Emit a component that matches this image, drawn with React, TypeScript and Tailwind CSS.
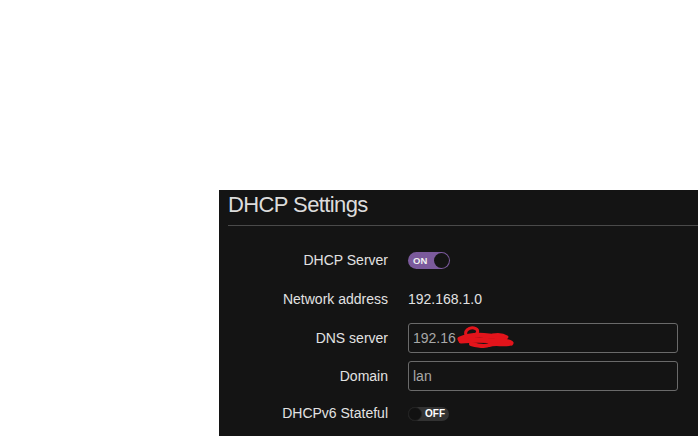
import React from "react";

const font = { fontFamily: '"Liberation Sans", Arial, sans-serif' };

function Label({ children }: { children: React.ReactNode }) {
  return (
    <div className="w-[169px] shrink-0 text-right text-[14px] text-[#e2e2e2]">{children}</div>
  );
}

export default function App() {
  return (
    <div className="min-h-[436px] w-[698px] bg-white pl-[219px] pt-[190px]" style={font}>
      <div className="h-[246px] w-[479px] bg-[#141414] overflow-hidden">
        <div className="pl-[9px]">
          <div className="h-[35px] pt-[2px] text-[22px] leading-[26px] tracking-[-0.6px] text-[#dcdcdc]">
            DHCP Settings
          </div>
          <div className="h-px bg-[#4a4a4a]" />
        </div>
        <div className="mt-[15px] flex flex-col">
          <div className="flex h-[39px] items-center gap-[20px]">
            <Label>DHCP Server</Label>
            <div className="relative flex h-[17px] w-[42px] items-center rounded-full bg-[#7b5a9c]">
              <span className="pl-[5px] text-[9.5px] font-bold leading-none text-[#f0f0f0]">ON</span>
              <span className="absolute right-[1px] top-[1px] h-[15px] w-[15px] rounded-full bg-[#141414]" />
            </div>
          </div>
          <div className="flex h-[39px] items-center gap-[20px]">
            <Label>Network address</Label>
            <div className="text-[14px] text-[#e2e2e2]">192.168.1.0</div>
          </div>
          <div className="flex h-[38px] items-center gap-[20px]">
            <Label>DNS server</Label>
            <div className="relative flex h-[30px] w-[270px] items-center rounded-[3px] border border-[#6a6a6a] pl-[4px] text-[14px] text-[#a8a8a8]">
              192.16
              <svg className="absolute left-[48px] top-[2px]" width="58" height="26" viewBox="0 0 58 26">
                <g fill="none" stroke="#e3141b" strokeLinecap="round" strokeLinejoin="round">
                  <path d="M10 11 C 6 5, 12 1, 17 2 C 22 3, 22 8, 16 10" strokeWidth="3" />
                  <path d="M3 13 C 12 9, 24 9, 32 10 C 38 11, 44 10, 48 12" strokeWidth="5" />
                  <path d="M4 15 C 14 14, 28 14, 40 15 C 46 15, 51 15, 54 17" strokeWidth="5" />
                  <path d="M14 18 C 22 20, 28 21, 32 19 C 38 17, 44 19, 52 18" strokeWidth="4" />
                  <path d="M36 9 C 42 8, 47 9, 50 11" strokeWidth="3" />
                </g>
              </svg>
            </div>
          </div>
          <div className="flex h-[38px] items-center gap-[20px]">
            <Label>Domain</Label>
            <div className="flex h-[30px] w-[270px] items-center rounded-[3px] border border-[#6a6a6a] pl-[4px] text-[14px] text-[#a8a8a8]">
              lan
            </div>
          </div>
          <div className="flex h-[37px] items-center gap-[20px]">
            <Label>DHCPv6 Stateful</Label>
            <div className="relative flex h-[14px] w-[41px] items-center justify-end rounded-full bg-[#333333]">
              <span className="absolute left-0 top-0 h-[14px] w-[14px] rounded-full bg-[#111111] border border-[#222]" />
              <span className="pr-[4px] text-[10px] font-bold leading-none text-white">OFF</span>
            </div>
          </div>
        </div>
      </div>
    </div>
  );
}
